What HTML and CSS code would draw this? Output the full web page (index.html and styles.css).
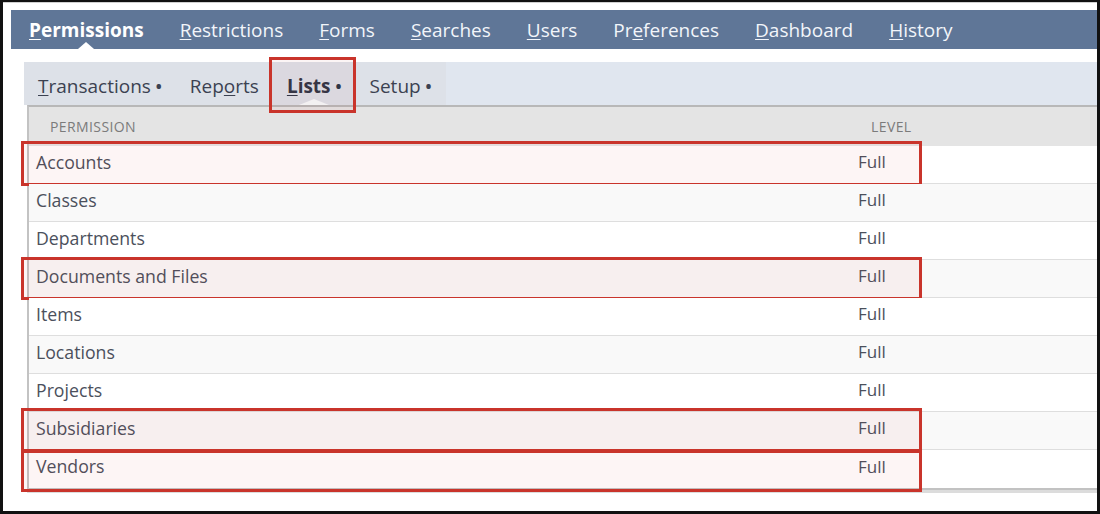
FILE: index.html
```html
<!DOCTYPE html>
<html>
<head>
<meta charset="utf-8">
<link rel="stylesheet" href="styles.css">
</head>
<body>
<div class="frame">
  <nav class="mainnav">
    <span class="navitem active"><u>P</u>ermissions</span>
    <span class="navitem"><u>R</u>estrictions</span>
    <span class="navitem"><u>F</u>orms</span>
    <span class="navitem"><u>S</u>earches</span>
    <span class="navitem"><u>U</u>sers</span>
    <span class="navitem">Pr<u>e</u>ferences</span>
    <span class="navitem"><u>D</u>ashboard</span>
    <span class="navitem"><u>H</u>istory</span>
  </nav>
  <div class="panel">
    <div class="subbar">
      <div class="subtabs">
        <span class="subtab"><u>T</u>ransactions <b class="dot">•</b></span>
        <span class="subtab">Rep<u>o</u>rts</span>
        <span class="subtab active"><u>L</u>ists <b class="dot">•</b></span>
        <span class="subtab">Setup <b class="dot">•</b></span>
      </div>
    </div>
    <div class="table">
      <div class="thead">
        <span class="c1">PERMISSION</span>
        <span class="c2">LEVEL</span>
      </div>
      <div class="row hl hl-first"><span class="c1">Accounts</span><span class="c2">Full</span></div>
      <div class="row alt"><span class="c1">Classes</span><span class="c2">Full</span></div>
      <div class="row"><span class="c1">Departments</span><span class="c2">Full</span></div>
      <div class="row alt hl hl-doc"><span class="c1">Documents and Files</span><span class="c2">Full</span></div>
      <div class="row"><span class="c1">Items</span><span class="c2">Full</span></div>
      <div class="row alt"><span class="c1">Locations</span><span class="c2">Full</span></div>
      <div class="row"><span class="c1">Projects</span><span class="c2">Full</span></div>
      <div class="row alt hl hl-sub"><span class="c1">Subsidiaries</span><span class="c2">Full</span></div>
      <div class="row hl hl-last"><span class="c1">Vendors</span><span class="c2">Full</span></div>
    </div>
  </div>
</div>
</body>
</html>
```
FILE: styles.css
```css
html, body {
  margin: 0;
  padding: 0;
  background: #fff;
}
.frame {
  width: 1100px;
  height: 514px;
  box-sizing: border-box;
  border: 3px solid #111;
  border-top-width: 2px;
  background: #fff;
  overflow: hidden;
  padding: 8px 0 0 8px;
  font-family: "Open Sans", "Liberation Sans", sans-serif;
  box-shadow: inset 0 1px 0 #d0d0d0;
}
.mainnav {
  display: flex;
  align-items: center;
  height: 39px;
  background: #5f7697;
  white-space: nowrap;
}
.navitem {
  position: relative;
  padding: 2px 18px 0;
  color: #f2f5fa;
  font-size: 19px;
  line-height: 37px;
  height: 37px;
}
.navitem u {
  text-decoration-thickness: 1px;
  text-underline-offset: 2px;
}
.navitem.active {
  font-weight: 700;
  color: #fff;
}
.navitem.active::after {
  content: "";
  position: absolute;
  left: 50%;
  bottom: 0;
  margin-left: -8px;
  border-left: 8px solid transparent;
  border-right: 8px solid transparent;
  border-bottom: 7px solid #fff;
}
.panel {
  margin: 13px 0 0 13px;
}
.subbar {
  height: 43px;
  background: #e0e6ef;
  display: flex;
}
.subtabs {
  display: flex;
  background: #dde1e8;
  height: 43px;
}
.subtab {
  position: relative;
  padding: 0 14px;
  font-size: 19px;
  color: #3b4151;
  line-height: 48px;
  white-space: nowrap;
}
.subtab u {
  text-decoration-thickness: 1px;
  text-underline-offset: 2px;
}
.subtab .dot {
  font-size: 16px;
  font-weight: 700;
  position: relative;
  top: -1px;
}
.subtab.active {
  font-weight: 700;
  color: #2f3546;
}
.subtab.active::before {
  content: "";
  position: absolute;
  left: -4px;
  right: 0;
  top: -5px;
  bottom: -8px;
  border: 3px solid #c9342b;
  background: rgba(200, 60, 60, 0.05);
}
.subtab.active::after {
  content: "";
  position: absolute;
  left: 50%;
  bottom: 0;
  margin-left: -15px;
  border-left: 15px solid transparent;
  border-right: 15px solid transparent;
  border-bottom: 6px solid #f3f1f2;
}
.table {
  margin-left: 3px;
  border-left: 2px solid #c3c3c3;
  border-top: 2px solid #b8b8b8;
  border-bottom: 2px solid #c2c2c2;
  box-shadow: 0 3px 0 #dcdcdc;
}
.thead {
  display: grid;
  grid-template-columns: 822px 1fr;
  height: 39px;
  align-items: center;
  background: #e4e4e4;
  color: #7b7b7b;
  font-size: 14px;
  letter-spacing: 0.4px;
}
.thead .c1 {
  padding-left: 21px;
}
.thead .c2 {
  padding-left: 20px;
}
.row {
  position: relative;
  display: grid;
  grid-template-columns: 822px 1fr;
  height: 37px;
  align-items: center;
  border-bottom: 1px solid #dedede;
  background: #fff;
  color: #4b505c;
  font-size: 17.7px;
}
.row:last-child {
  border-bottom: none;
  height: 38px;
}
.row.alt {
  background: #f9f9f9;
}
.row .c1,
.row .c2 {
  padding-left: 7px;
  position: relative;
  top: -3px;
}
.row .c2 {
  font-size: 17px;
}
.row.hl::after {
  content: "";
  position: absolute;
  left: -8px;
  width: 895px;
  top: -5px;
  bottom: -3px;
  border: 3px solid #c9342b;
  background: rgba(210, 60, 50, 0.05);
}
.row.hl-doc::after {
  top: -3px;
  bottom: -3px;
}
.row.hl-sub::after {
  top: -4px;
  bottom: -3px;
}
.row.hl-last::after {
  top: 0;
  bottom: -4px;
}
```
